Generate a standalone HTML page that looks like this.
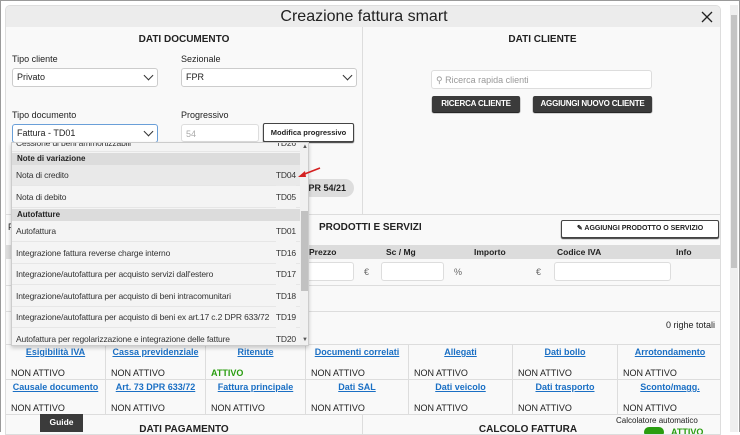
<!DOCTYPE html>
<html><head><meta charset="utf-8"><style>
*{box-sizing:border-box;margin:0;padding:0}
body{width:740px;height:432px;overflow:hidden;background:#fff;font-family:"Liberation Sans",Arial,sans-serif;font-size:9px;color:#222;position:relative}
.a{position:absolute}
.frame{left:0;top:0;width:740px;height:432px;border:1px solid #9a9a9a;border-bottom:none}
.modal{left:5px;top:5px;width:716px;height:430px;background:#f9f9f9;border:1px solid #ddd;border-radius:5px 5px 0 0;overflow:hidden}
.hdr{left:0;top:0;width:716px;height:21px;background:#ececec;text-align:center;font-size:16px;line-height:22px;color:#222;font-family:"Liberation Sans",sans-serif}
.b{font-weight:bold}
.sel{background:#fff;border:1px solid #ccc;border-radius:3px;height:19px;padding-left:4px;line-height:17px;font-size:9px}
.chev{position:absolute;right:5px;width:7px;height:7px;border-right:1.5px solid #333;border-bottom:1.5px solid #333;transform:rotate(45deg);top:3px}
.btn{background:#3b3b3b;color:#fff;font-weight:bold;font-size:8px;text-align:center;border-radius:2px;line-height:16px;box-shadow:0 1px 1px #000;letter-spacing:-0.2px}
.dd{left:11px;top:142px;width:298px;height:204px;background:#f4f4f4;border:1px solid #ccc;overflow:hidden;box-shadow:0 2px 4px rgba(0,0,0,.2)}
.it{position:absolute;left:0;width:288px;height:21px;line-height:21px;padding:0 4px;border-bottom:1px solid #e6e6e6;font-size:8.5px;color:#333;letter-spacing:-0.15px;white-space:nowrap}
.it span{position:absolute;right:4px;background:inherit}
.gh{position:absolute;left:0;width:288px;height:12px;line-height:12px;background:#dcdcdc;padding-left:5px;font-weight:bold;font-size:8px}
.cell{position:absolute;height:35px;border-right:1px solid #ddd;border-bottom:1px solid #ddd}
.cell .t{position:absolute;left:0;right:0;top:2px;text-align:center;color:#1a6fc4;text-decoration:underline;font-weight:bold;font-size:9px}
.cell .v{position:absolute;left:5px;bottom:1px;font-size:9px}
.inp{background:#fff;border:1px solid #ddd;border-radius:3px}
</style></head><body>
<div class="a frame"></div>
<div class="a" style="left:730px;top:5px;width:8px;height:427px;background:#efefef"></div>
<div class="a" style="left:731px;top:15px;width:6px;height:253px;background:#c4c4c4"></div>
<div class="a modal">
 <div class="a hdr">Creazione fattura smart</div>
 <svg class="a" style="left:695px;top:5px" width="12" height="12"><path d="M1 1L11 11M11 1L1 11" stroke="#222" stroke-width="1.3"/></svg>
 <div class="a" style="left:356px;top:21px;width:1px;height:187px;background:#ddd"></div>
 <div class="a" style="left:0;top:208px;width:716px;height:1px;background:#ddd"></div>
 <div class="a b" style="left:0;width:356px;top:28px;text-align:center;font-size:10px">DATI DOCUMENTO</div>
 <div class="a b" style="left:357px;width:359px;top:28px;text-align:center;font-size:10px">DATI CLIENTE</div>
 <div class="a" style="left:6px;top:48px">Tipo cliente</div>
 <div class="a" style="left:175px;top:48px">Sezionale</div>
 <div class="a sel" style="left:6px;top:62px;width:146px">Privato<i class="chev"></i></div>
 <div class="a sel" style="left:175px;top:62px;width:176px">FPR<i class="chev"></i></div>
 <div class="a" style="left:6px;top:104px">Tipo documento</div>
 <div class="a" style="left:175px;top:104px">Progressivo</div>
 <div class="a sel" style="left:6px;top:118px;width:146px;border-color:#6a9fd8">Fattura - TD01<i class="chev"></i></div>
 <div class="a inp" style="left:175px;top:118px;width:78px;height:18px;color:#aaa;padding:4px 4px">54</div>
 <div class="a" style="left:257px;top:117px;width:91px;height:19px;background:#fff;border:1px solid #444;border-radius:2px;text-align:center;line-height:17px;font-weight:bold;font-size:7.5px;box-shadow:0 1px 1px #333">Modifica progressivo</div>
 <div class="a b" style="left:296px;top:173px;width:52px;height:18px;background:#ddd;border-radius:9px;text-align:right;padding-right:8px;line-height:18px;font-size:9px">PR 54/21</div>
 <div class="a inp" style="left:425px;top:64px;width:221px;height:19px;color:#999;padding:4px 4px">&#9906; Ricerca rapida clienti</div>
 <div class="a btn" style="left:426px;top:90px;width:88px">RICERCA CLIENTE</div>
 <div class="a btn" style="left:527px;top:90px;width:119px">AGGIUNGI NUOVO CLIENTE</div>

 <div class="a" style="left:2px;top:216px;font-size:9px">F</div>
 <div class="a b" style="left:313px;top:216px;font-size:10px">PRODOTTI E SERVIZI</div>
 <div class="a" style="left:555px;top:214px;width:158px;height:18px;background:#fff;border:1px solid #444;border-radius:2px;text-align:center;line-height:16px;font-weight:bold;font-size:7px;box-shadow:0 1px 1px #333">✎ AGGIUNGI PRODOTTO O SERVIZIO</div>
 <div class="a" style="left:0;top:239px;width:716px;height:14px;background:#dcdcdc"></div>
 <div class="a b" style="left:303px;top:241px;font-size:8.5px">Prezzo</div>
 <div class="a b" style="left:380px;top:241px;font-size:8.5px">Sc / Mg</div>
 <div class="a b" style="left:468px;top:241px;font-size:8.5px">Importo</div>
 <div class="a b" style="left:551px;top:241px;font-size:8.5px">Codice IVA</div>
 <div class="a b" style="left:670px;top:241px;font-size:8.5px">Info</div>
 <div class="a inp" style="left:290px;top:256px;width:58px;height:19px"></div>
 <div class="a" style="left:358px;top:261px;color:#666">€</div>
 <div class="a inp" style="left:375px;top:256px;width:63px;height:19px"></div>
 <div class="a" style="left:448px;top:261px;color:#666">%</div>
 <div class="a" style="left:530px;top:261px;color:#666">€</div>
 <div class="a inp" style="left:548px;top:256px;width:117px;height:19px"></div>
 <div class="a" style="left:0;top:279px;width:716px;height:1px;background:#ddd"></div>
 <div class="a" style="left:0;top:305px;width:716px;height:1px;background:#ddd"></div>
 <div class="a" style="left:600px;top:314px;width:109px;text-align:right">0 righe totali</div>
 <div class="a" style="left:0;top:338px;width:716px;height:1px;background:#ddd"></div>

 <div class="cell" style="left:0;top:339px;width:100px"><div class="t">Esigibilità IVA</div><div class="v">NON ATTIVO</div></div>
 <div class="cell" style="left:100px;top:339px;width:100px"><div class="t">Cassa previdenziale</div><div class="v">NON ATTIVO</div></div>
 <div class="cell" style="left:200px;top:339px;width:100px"><div class="t">Ritenute</div><div class="v b" style="color:#2a9d10">ATTIVO</div></div>
 <div class="cell" style="left:300px;top:339px;width:103px"><div class="t">Documenti correlati</div><div class="v">NON ATTIVO</div></div>
 <div class="cell" style="left:403px;top:339px;width:104px"><div class="t">Allegati</div><div class="v">NON ATTIVO</div></div>
 <div class="cell" style="left:507px;top:339px;width:105px"><div class="t">Dati bollo</div><div class="v">NON ATTIVO</div></div>
 <div class="cell" style="left:612px;top:339px;width:104px;border-right:none"><div class="t">Arrotondamento</div><div class="v">NON ATTIVO</div></div>
 <div class="cell" style="left:0;top:374px;width:100px"><div class="t">Causale documento</div><div class="v">NON ATTIVO</div></div>
 <div class="cell" style="left:100px;top:374px;width:100px"><div class="t">Art. 73 DPR 633/72</div><div class="v">NON ATTIVO</div></div>
 <div class="cell" style="left:200px;top:374px;width:100px"><div class="t">Fattura principale</div><div class="v">NON ATTIVO</div></div>
 <div class="cell" style="left:300px;top:374px;width:103px"><div class="t">Dati SAL</div><div class="v">NON ATTIVO</div></div>
 <div class="cell" style="left:403px;top:374px;width:104px"><div class="t">Dati veicolo</div><div class="v">NON ATTIVO</div></div>
 <div class="cell" style="left:507px;top:374px;width:105px"><div class="t">Dati trasporto</div><div class="v">NON ATTIVO</div></div>
 <div class="cell" style="left:612px;top:374px;width:104px;border-right:none"><div class="t">Sconto/magg.</div><div class="v">NON ATTIVO</div></div>
 <div class="a" style="left:356px;top:409px;width:1px;height:21px;background:#ddd"></div>
 <div class="a b" style="left:0;width:356px;top:418px;text-align:center;font-size:10px">DATI PAGAMENTO</div>
 <div class="a b" style="left:357px;width:330px;top:418px;text-align:center;font-size:10px">CALCOLO FATTURA</div>
 <div class="a" style="left:610px;top:410px;font-size:8px">Calcolatore automatico</div>
 <div class="a" style="left:638px;top:421px;width:20px;height:10px;background:#2a9d10;border-radius:5px"></div>
 <div class="a b" style="left:665px;top:421px;color:#2a9d10;font-size:9px">ATTIVO</div>
</div>
<div class="a b" style="left:40px;top:414px;width:43px;height:18px;background:#3b3b3b;color:#fff;text-align:center;line-height:16px;font-size:8.5px">Guide</div>

<div class="a dd">
 <div class="it" style="top:-6px;height:15px;line-height:12px;background:#f4f4f4">Cessione di beni ammortizzabili<span>TD26</span></div>
 <div class="gh" style="top:10px">Note di variazione</div>
 <div class="it" style="top:22px;background:#e9e9e9">Nota di credito<span>TD04</span></div>
 <div class="it" style="top:44px;background:#f4f4f4">Nota di debito<span>TD05</span></div>
 <div class="gh" style="top:66px">Autofatture</div>
 <div class="it" style="top:78px;background:#f4f4f4">Autofattura<span>TD01</span></div>
 <div class="it" style="top:100px;background:#f4f4f4">Integrazione fattura reverse charge interno<span>TD16</span></div>
 <div class="it" style="top:121px;background:#f4f4f4">Integrazione/autofattura per acquisto servizi dall'estero<span>TD17</span></div>
 <div class="it" style="top:143px;background:#f4f4f4">Integrazione/autofattura per acquisto di beni intracomunitari<span>TD18</span></div>
 <div class="it" style="top:164px;background:#f4f4f4">Integrazione/autofattura per acquisto di beni ex art.17 c.2 DPR 633/72<span>TD19</span></div>
 <div class="it" style="top:186px;background:#f4f4f4">Autofattura per regolarizzazione e integrazione delle fatture<span>TD20</span></div>
 <div class="a" style="left:288px;top:0;width:9px;height:204px;background:#f0f0f0"></div>
 <div class="a" style="left:289px;top:68px;width:7px;height:80px;background:#c1c1c1"></div>
 <div class="a" style="left:290px;top:1px;font-size:6px;color:#555">▲</div>
 <div class="a" style="left:290px;top:194px;font-size:6px;color:#555">▼</div>
</div>
<svg class="a" style="left:296px;top:166px" width="26" height="14"><line x1="24" y1="2" x2="6" y2="9" stroke="#d42020" stroke-width="1.6"/><polygon points="2,11 9,5 10,11" fill="#d42020"/></svg>
</body></html>
